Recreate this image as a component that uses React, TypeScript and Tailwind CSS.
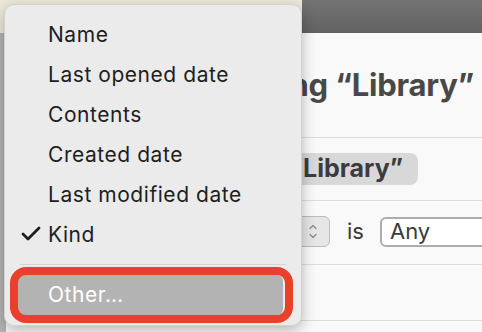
import { Check, ChevronUp, ChevronDown } from "lucide-react";

const items = ["Name", "Last opened date", "Contents", "Created date", "Last modified date", "Kind"];

export default function App() {
  return (
    <div className="relative w-[482px] h-[332px] overflow-hidden flex flex-col font-['Inter',sans-serif]">
      {/* backdrop: title bar */}
      <div className="h-[33px] flex shrink-0">
        <div className="w-[302px] bg-[#ede9da]" />
        <div className="flex-1 bg-gradient-to-b from-[#737373] to-[#626262]" />
      </div>

      {/* backdrop: find window */}
      <div className="flex-1 flex min-w-0">
        <div className="w-[6px] shrink-0 bg-[#b4b4b4]" />
        <div className="flex-1 min-w-0 overflow-hidden bg-[#f9f9f9] flex flex-col">
          <div className="h-[105px] shrink-0 flex items-center justify-end pr-[8px] border-b border-[#dcdcdc]">
            <span className="text-[31px] font-bold text-[#484848] tracking-[-0.2px] whitespace-nowrap">Searching “Library”</span>
          </div>
          <div className="h-[63px] shrink-0 flex items-center justify-end pr-[64px] border-b border-[#dcdcdc]">
            <div className="h-[32px] w-[200px] rounded-[8px] bg-[#d8d8d8] flex items-center justify-end pr-[15px]">
              <span className="text-[25px] font-bold text-[#3c3c3c] whitespace-nowrap">“Library”</span>
            </div>
          </div>
          <div className="h-[64px] shrink-0 flex items-center border-b border-[#dcdcdc] pb-[2px]">
            <div className="ml-[204px] shrink-0 h-[31px] w-[120px] rounded-[6px] border border-[#bcbcbc] bg-[#e6e6e6] flex items-center justify-end pr-[10px]">
              <div className="flex flex-col items-center text-[#8a8a8a] -space-y-[3px]">
                <ChevronUp size={12} strokeWidth={2.5} />
                <ChevronDown size={12} strokeWidth={2.5} />
              </div>
            </div>
            <span className="ml-[17px] shrink-0 text-[22px] text-[#3a3a3a]">is</span>
            <div className="ml-[16px] shrink-0 h-[30px] w-[150px] rounded-[6px] border-2 border-[#adadad] bg-white flex items-center pl-[8px]">
              <span className="text-[22px] text-[#3a3a3a]">Any</span>
            </div>
          </div>
          <div className="h-[56px] shrink-0 border-b border-[#dcdcdc]" />
          <div className="flex-1" />
        </div>
      </div>

      {/* context menu */}
      <div className="absolute left-[4px] top-[4px] w-[298px] h-[322px] rounded-[10px] bg-[#ebebeb] border border-[#d2d2d2] shadow-[0_4px_14px_rgba(0,0,0,0.28)] pt-[10px] flex flex-col">
        {items.map((label) => (
          <div key={label} className="h-[40px] relative flex items-center pl-[43px] text-[21px] text-[#1e1e1e] tracking-[0.55px]">
            {label === "Kind" && (
              <Check size={24} strokeWidth={2.8} className="absolute left-[14px] top-[7px] text-[#1e1e1e]" />
            )}
            {label}
          </div>
        ))}
        <div className="mt-[9px] mx-[15px] h-px bg-[#d4d4d4]" />
        <div className="mt-[10px] ml-[13px] mr-[18px] h-[40px] rounded-[6px] bg-[#b3b3b3] flex items-center pl-[30px] text-[21px] text-white tracking-[0.55px]">
          Other…
        </div>
      </div>

      {/* annotation ring */}
      <div className="absolute left-[10px] top-[267px] w-[283px] h-[56px] rounded-[16px] border-[8px] border-[#e8402a]" />
    </div>
  );
}
